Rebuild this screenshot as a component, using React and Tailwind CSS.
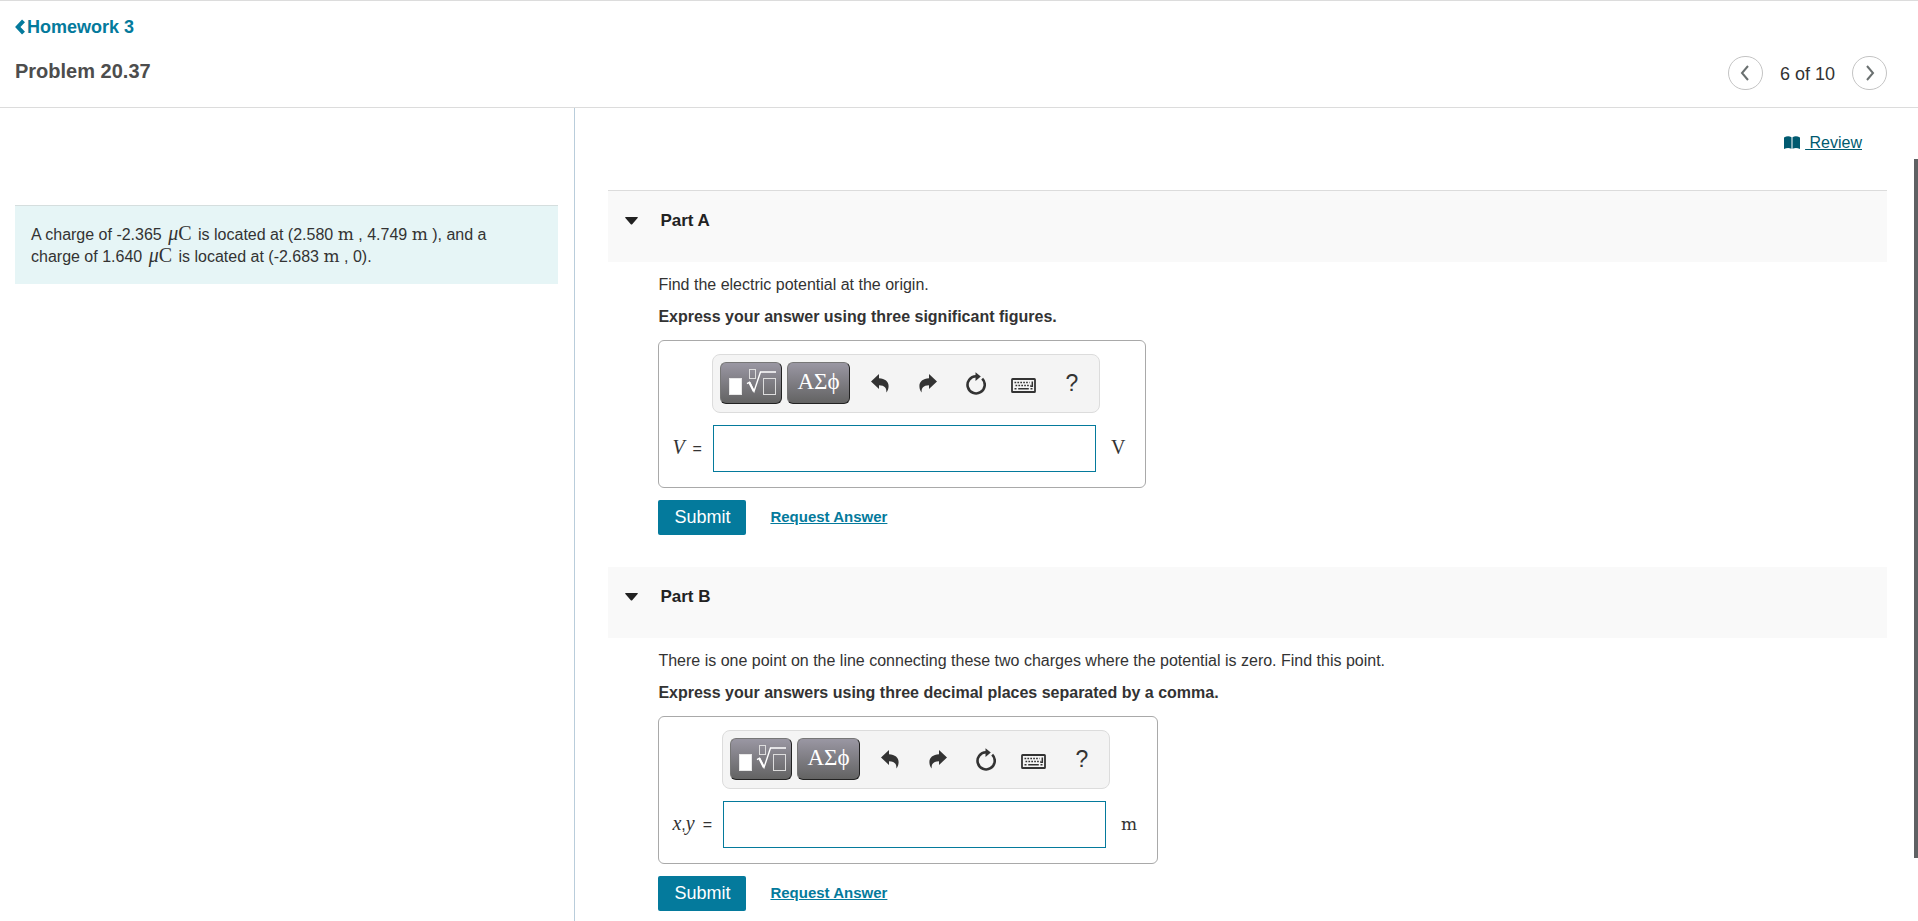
import { useState } from "react";

const problem = {
  assignment: "Homework 3",
  title: "Problem 20.37",
  position: 6,
  total: 10,
};

const parts = [
  {
    id: "a",
    name: "Part A",
    question: "Find the electric potential at the origin.",
    hint: "Express your answer using three significant figures.",
    label: <MathText italic>V</MathText>,
    unit: <MathText>V</MathText>,
  },
  {
    id: "b",
    name: "Part B",
    question:
      "There is one point on the line connecting these two charges where the potential is zero. Find this point.",
    hint: "Express your answers using three decimal places separated by a comma.",
    label: (
      <>
        <MathText italic>x</MathText>,<MathText italic>y</MathText>
      </>
    ),
    unit: <Meters />,
  },
];

function MathText({ italic, children }) {
  return (
    <span className={`font-['Liberation_Serif',serif] text-[20px] leading-none ${italic ? "italic" : ""}`}>
      {children}
    </span>
  );
}

function Meters() {
  return <span className="font-['DejaVu_Serif',serif] text-[17px] leading-none">m</span>;
}

function MicroCoulombs() {
  return (
    <span className="px-[2px] font-['Liberation_Serif',serif] text-[20px] leading-none">
      <i>μ</i>C
    </span>
  );
}

function NavButton({ label, path }) {
  return (
    <button aria-label={label} className="flex h-[34px] w-[35px] items-center justify-center rounded-full border border-[#c4c4c4] bg-white">
      <svg width="10" height="16" viewBox="0 0 10 16" fill="none" stroke="#6a7070" strokeWidth="2">
        <path d={path} />
      </svg>
    </button>
  );
}

function Header() {
  return (
    <header className="border-t border-b border-[#dcdcdc] pt-[15px] pr-[31px] pb-[17px] pl-[15px]">
      <a href="#" className="flex w-fit items-center gap-[2px] text-[18px] leading-[22px] font-bold text-[#047a9c]">
        <svg width="10" height="16" viewBox="0 0 10 16" fill="none" stroke="currentColor" strokeWidth="4">
          <path d="M8.5 1.8 2.8 8l5.7 6.2" />
        </svg>
        {problem.assignment}
      </a>
      <div className="flex items-center justify-between pt-[18px]">
        <h1 className="pb-1 text-[20px] leading-7 font-bold text-[#4d4d4d]">{problem.title}</h1>
        <nav className="flex items-center gap-[17px]">
          <NavButton label="Previous" path="M8 1 2 8l6 7" />
          <span className="pt-[2px] text-[18px] leading-6">
            {problem.position} of {problem.total}
          </span>
          <NavButton label="Next" path="M2 1l6 7-6 7" />
        </nav>
      </div>
    </header>
  );
}

function TemplateIcon() {
  return (
    <svg width="50" height="34" viewBox="0 0 50 34" fill="none">
      <rect x="3.5" y="12.5" width="12" height="16" fill="#fff" stroke="#e8e8e8" />
      <rect x="23.5" y="3.5" width="6" height="9" stroke="#ddd" />
      <path d="M21 17.6l2.500-1.400L28 25.500l6.500-19.500H50" stroke="#fff" strokeWidth="1.400" />
      <path d="M23.400 16.400l4.400 8.800" stroke="#fff" strokeWidth="2.200" />
      <rect x="37.5" y="12.5" width="12" height="16" stroke="#ddd" />
    </svg>
  );
}

function UndoIcon() {
  return (
    <svg width="18" height="20" viewBox="0 0 18 20" fill="#333">
      <path d="M0 8.5 8 1v4.2c6 .3 9.6 3.2 9.6 7.8 0 2.8-.9 4.9-2.3 6.6.5-4.6-1.6-7.2-7.3-7.4V16z" />
    </svg>
  );
}

function RedoIcon() {
  return (
    <svg width="18" height="20" viewBox="0 0 18 20" fill="#333">
      <path d="M18 8.5 10 1v4.2C4 5.500.4 8.400.4 13c0 2.800.9 4.900 2.300 6.600-.5-4.600 1.600-7.200 7.300-7.400V16z" />
    </svg>
  );
}

function ResetIcon() {
  return (
    <svg width="20" height="23" viewBox="0 0 20 23" fill="none">
      <path d="M16.2 6.700a8.600 8.600 0 1 1-6.200-2.500h1" stroke="#333" strokeWidth="2.600" />
      <path d="M9.500.2 14.800 4.600 9.500 9z" fill="#333" />
    </svg>
  );
}

function KeyboardIcon() {
  return (
    <svg width="25" height="15" viewBox="0 0 25 15" fill="none" stroke="#333">
      <rect x="1" y="1" width="23" height="13" rx="0.6" strokeWidth="1.800" />
      <path d="M3.500 4.500h15M4.500 7.500h15" strokeWidth="1.700" strokeDasharray="1.700 1.200" />
      <path d="M21.300 3.400v4.800h-2" strokeWidth="1.500" />
      <path d="M3.500 10.800h2M7.200 10.800h10.600M19.500 10.800h2" strokeWidth="1.400" />
    </svg>
  );
}

function ToolButton({ label, children }) {
  return (
    <button aria-label={label} className="flex h-[42px] w-12 items-center justify-center">
      {children}
    </button>
  );
}

function Toolbar() {
  const dark =
    "flex h-[42px] items-center justify-center rounded-md border border-t-[#777] border-r-[#222] border-b-[#222] border-l-[#777] bg-linear-to-b from-[#9a97a3] to-[#636363] text-white";

  return (
    <div className="flex h-[59px] w-[388px] items-start rounded-lg border border-[#dcdcdc] bg-[#f4f4f4] py-[7px] pl-[7px]">
      <button aria-label="Templates" className={`${dark} w-[62px]`}>
        <TemplateIcon />
      </button>
      <button
        aria-label="Symbols"
        className={`${dark} ml-[5px] w-[63px] pb-[2px] font-['Liberation_Serif',serif] text-[23px] leading-6`}
      >
        ΑΣϕ
      </button>
      <div className="ml-[6px] flex">
        <ToolButton label="Undo"><UndoIcon /></ToolButton>
        <ToolButton label="Redo"><RedoIcon /></ToolButton>
        <ToolButton label="Reset"><ResetIcon /></ToolButton>
        <ToolButton label="Keyboard shortcuts">
          <span className="pt-1"><KeyboardIcon /></span>
        </ToolButton>
        <ToolButton label="Help"><span className="text-[23px] leading-6">?</span></ToolButton>
      </div>
    </div>
  );
}

function Part({ part }) {
  const [open, setOpen] = useState(true);
  const [answer, setAnswer] = useState("");
  const inputId = `answer-${part.id}`;

  return (
    <section className="pb-8">
      <h2 className="bg-[#f9f9f9] pt-4 pb-[27px] pl-[17px]">
        <button
          onClick={() => setOpen(!open)}
          aria-expanded={open}
          className="flex items-center gap-[22px] text-[17px] leading-7 font-bold text-[#222]"
        >
          <svg width="13" height="8" viewBox="0 0 13 8" fill="currentColor" className={open ? "" : "-rotate-90"}>
            <path d="M.6 0h11.800q.8.400.2 1L7.200 7.300q-.7.600-1.400 0L.4 1Q-.2.400.6 0z" />
          </svg>
          {part.name}
        </button>
      </h2>
      {open && (
        <div className="pt-3 pl-[50px]">
          <p className="leading-[22px]">{part.question}</p>
          <p className="pt-[10px] leading-[22px] font-bold">{part.hint}</p>
          <div className="mt-3 grid w-fit grid-cols-[auto_auto_auto] items-center rounded-md border border-[#a9a9a9] pt-[13px] pr-5 pb-[15px] pl-[13px]">
            <div className="col-span-2 col-start-2">
              <Toolbar />
            </div>
            <label htmlFor={inputId} className="mt-3 flex items-baseline gap-2 pr-[10px]">
              <span>{part.label}</span>
              <span>=</span>
            </label>
            <input
              id={inputId}
              value={answer}
              onChange={(e) => setAnswer(e.target.value)}
              className="mt-3 ml-px h-[47px] w-[383px] border border-[#047a9c] bg-white px-2 outline-none"
            />
            <span className="mt-3 pl-[15px]">{part.unit}</span>
          </div>
          <div className="flex items-center gap-6 pt-3">
            <button className="h-[35px] rounded-xs bg-[#047a9c] px-4 text-[18px] text-white">Submit</button>
            <a href="#" className="text-[15px] font-bold text-[#047a9c] underline">
              Request Answer
            </a>
          </div>
        </div>
      )}
    </section>
  );
}

export default function App() {
  return (
    <div className="relative flex h-screen flex-col overflow-hidden bg-white font-['Liberation_Sans',Arial,sans-serif] text-[16px] text-[#333]">
      <Header />
      <main className="flex min-h-0 flex-1">
        <aside className="w-[30%] shrink-0 border-r border-[#b9cddb] pt-[97px] pr-4 pl-[15px]">
          <p className="border-t border-[#d5dede] bg-[#e6f5f6] pt-[17px] pr-12 pb-[17px] pl-4 leading-5">
            A charge of -2.365 <MicroCoulombs /> is located at (2.580 <Meters /> , 4.749 <Meters /> ), and a{" "}
            <span className="whitespace-nowrap">
              charge of 1.640 <MicroCoulombs />
            </span>{" "}
            is located at (-2.683 <Meters /> , 0).
          </p>
        </aside>
        <div className="min-w-0 flex-1 overflow-hidden pr-[31px] pl-[33px]">
          <div className="flex justify-end pt-6 pr-[25px] pb-[36px]">
            <a href="#" className="flex items-center gap-[5px] leading-[22px] text-[#005a70]">
              <svg width="16" height="14" viewBox="0 0 16 14" fill="currentColor">
                <path d="M0 1.500Q4-.8 7.500 1.200v11.600Q4 11 0 13zM8.500 1.200Q12-.8 16 1.500V13q-4-2-7.500-.2z" />
              </svg>
              <span className="whitespace-pre underline"> Review</span>
            </a>
          </div>
          <div className="border-t border-[#dcdcdc]">
            {parts.map((part) => (
              <Part key={part.id} part={part} />
            ))}
          </div>
        </div>
      </main>
      <div className="absolute top-[159px] right-0 h-[699px] w-1 bg-[#5f6163]" />
    </div>
  );
}
